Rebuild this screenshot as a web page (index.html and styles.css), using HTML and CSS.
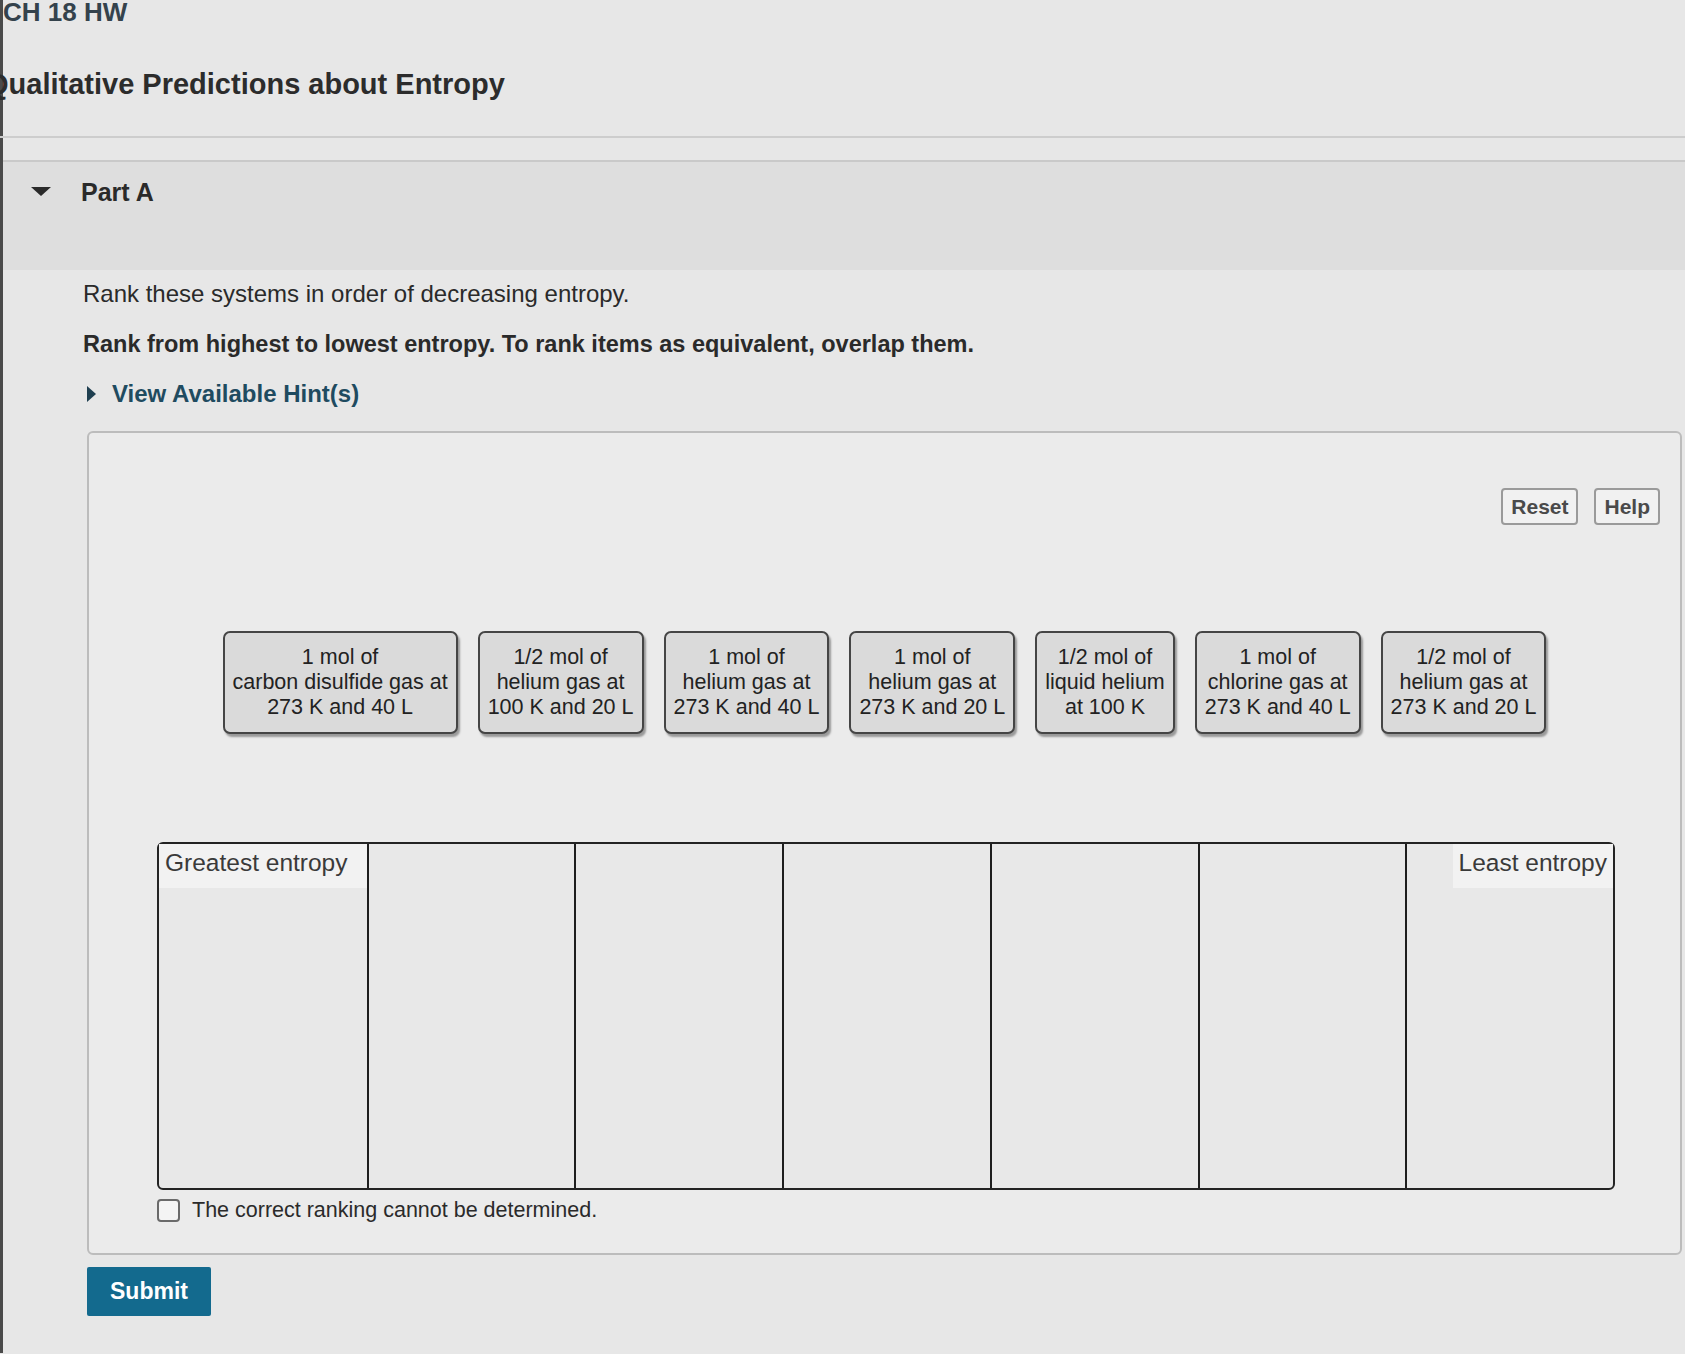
FILE: index.html
```html
<!DOCTYPE html>
<html lang="en">
<head>
  <meta charset="UTF-8">
  <title>CH 18 HW - Qualitative Predictions about Entropy</title>
  <meta name="viewport" content="width=device-width, initial-scale=1.0">
  <link rel="stylesheet" href="styles.css">
</head>
<body>

<div class="page">
  <div class="assignment">CH 18 HW</div>
  <h1 class="title">Qualitative Predictions about Entropy</h1>

  <div class="part-header">
    <span class="caret-down"></span>
    <h2>Part A</h2>
  </div>

  <div class="part-body">
    <p class="prompt">Rank these systems in order of decreasing entropy.</p>
    <p class="instructions">Rank from highest to lowest entropy. To rank items as equivalent, overlap them.</p>
    <div class="hint-toggle"><span class="caret-right"></span>View Available Hint(s)</div>

    <div class="ranking-panel">
      <div class="toolbar">
        <button class="tool-btn">Reset</button>
        <button class="tool-btn">Help</button>
      </div>

      <div class="items">
        <div class="item">1 mol of<br>carbon disulfide gas at<br>273 K and 40 L</div>
        <div class="item">1/2 mol of<br>helium gas at<br>100 K and 20 L</div>
        <div class="item">1 mol of<br>helium gas at<br>273 K and 40 L</div>
        <div class="item">1 mol of<br>helium gas at<br>273 K and 20 L</div>
        <div class="item">1/2 mol of<br>liquid helium<br>at 100 K</div>
        <div class="item">1 mol of<br>chlorine gas at<br>273 K and 40 L</div>
        <div class="item">1/2 mol of<br>helium gas at<br>273 K and 20 L</div>
      </div>

      <div class="rank-grid">
        <div class="slot"><span class="slot-label">Greatest entropy</span></div>
        <div class="slot"></div>
        <div class="slot"></div>
        <div class="slot"></div>
        <div class="slot"></div>
        <div class="slot"></div>
        <div class="slot slot-last"><span class="slot-label">Least entropy</span></div>
      </div>

      <label class="cannot">
        <span class="box"></span>
        The correct ranking cannot be determined.
      </label>
    </div>

    <button class="submit">Submit</button>
  </div>
</div>

</body>
</html>
```

FILE: styles.css
```css
* {
  box-sizing: border-box;
  font-family: "Liberation Sans", Arial, sans-serif;
}

body {
  margin: 0;
  background: #e7e7e7;
  color: #2a2a2a;
  overflow: hidden;
}

.page {
  border-left: 3px solid #4a4a4a;
  min-height: 1354px;
}

.assignment {
  font-size: 26px;
  font-weight: bold;
  color: #34424c;
  line-height: 26px;
  margin-top: -1px;
}

.title {
  margin: 41px 0 0 -17px;
  font-size: 29px;
  line-height: 36px;
  color: #2c2c2c;
  padding-bottom: 34px;
  border-bottom: 2px solid #cdcdcd;
}

.part-header {
  display: flex;
  align-items: flex-start;
  gap: 30px;
  margin-top: 22px;
  border-top: 2px solid #c9c9c9;
  background: #dedede;
  padding: 14px 0 0 28px;
  height: 110px;
}

.caret-down {
  width: 0;
  height: 0;
  margin-top: 11px;
  border-left: 10px solid transparent;
  border-right: 10px solid transparent;
  border-top: 9px solid #2a2a2a;
}

.part-header h2 {
  margin: 0;
  font-size: 25px;
  line-height: 32px;
  color: #2a2a2a;
}

.part-body {
  padding: 10px 3px 0 84px;
}

.prompt {
  margin: 0 0 0 -4px;
  font-size: 24px;
  line-height: 28px;
}

.instructions {
  margin: 22px 0 0 -4px;
  font-size: 23.5px;
  line-height: 28px;
  font-weight: bold;
}

.hint-toggle {
  display: flex;
  align-items: center;
  gap: 16px;
  margin-top: 22px;
  font-size: 24px;
  line-height: 28px;
  font-weight: bold;
  color: #1f4b60;
}

.caret-right {
  width: 0;
  height: 0;
  border-top: 8px solid transparent;
  border-bottom: 8px solid transparent;
  border-left: 9px solid #1f3f50;
}

.ranking-panel {
  margin-top: 23px;
  background: #ebebeb;
  border: 2px solid #bcbcbc;
  border-radius: 6px;
  padding: 55px 20px 30px 68px;
}

.toolbar {
  display: flex;
  justify-content: flex-end;
  gap: 16px;
}

.tool-btn {
  font-size: 21px;
  font-weight: bold;
  color: #4a4a4a;
  background: #f1f1f1;
  border: 2px solid #9a9a9a;
  border-radius: 4px;
  padding: 4px 8px;
  height: 37px;
}

.items {
  display: flex;
  justify-content: center;
  align-items: flex-start;
  gap: 20px;
  margin: 106px 48px 0 0;
}

.item {
  background: #dadada;
  border: 2px solid #454545;
  border-radius: 7px;
  box-shadow: 2px 3px 2px rgba(0, 0, 0, 0.35);
  padding: 12px 8px;
  text-align: center;
  font-size: 21.5px;
  line-height: 25px;
  color: #222;
  white-space: nowrap;
}

.rank-grid {
  display: grid;
  grid-template-columns: repeat(7, 1fr);
  width: 1458px;
  height: 348px;
  margin-top: 108px;
  border: 2px solid #232323;
  border-radius: 6px;
  background: #e8e8e8;
}

.slot {
  border-left: 2px solid #1e1e1e;
  display: flex;
  align-items: flex-start;
}

.slot:first-child {
  border-left: none;
}

.slot-last {
  justify-content: flex-end;
}

.slot-label {
  background: #f2f2f2;
  font-size: 24.5px;
  line-height: 30px;
  color: #3a3a3a;
  padding: 4px 6px 10px 6px;
}

.slot:first-child .slot-label {
  width: 100%;
}

.cannot {
  display: flex;
  align-items: center;
  gap: 12px;
  margin-top: 8px;
  font-size: 21.5px;
  color: #2a2a2a;
}

.box {
  width: 23px;
  height: 23px;
  border: 2px solid #6a6a6a;
  border-radius: 4px;
  background: #f4f4f4;
}

.submit {
  margin-top: 12px;
  width: 124px;
  height: 49px;
  background: #136a8e;
  color: #fff;
  border: none;
  border-radius: 2px;
  font-size: 23px;
  font-weight: bold;
}
```
